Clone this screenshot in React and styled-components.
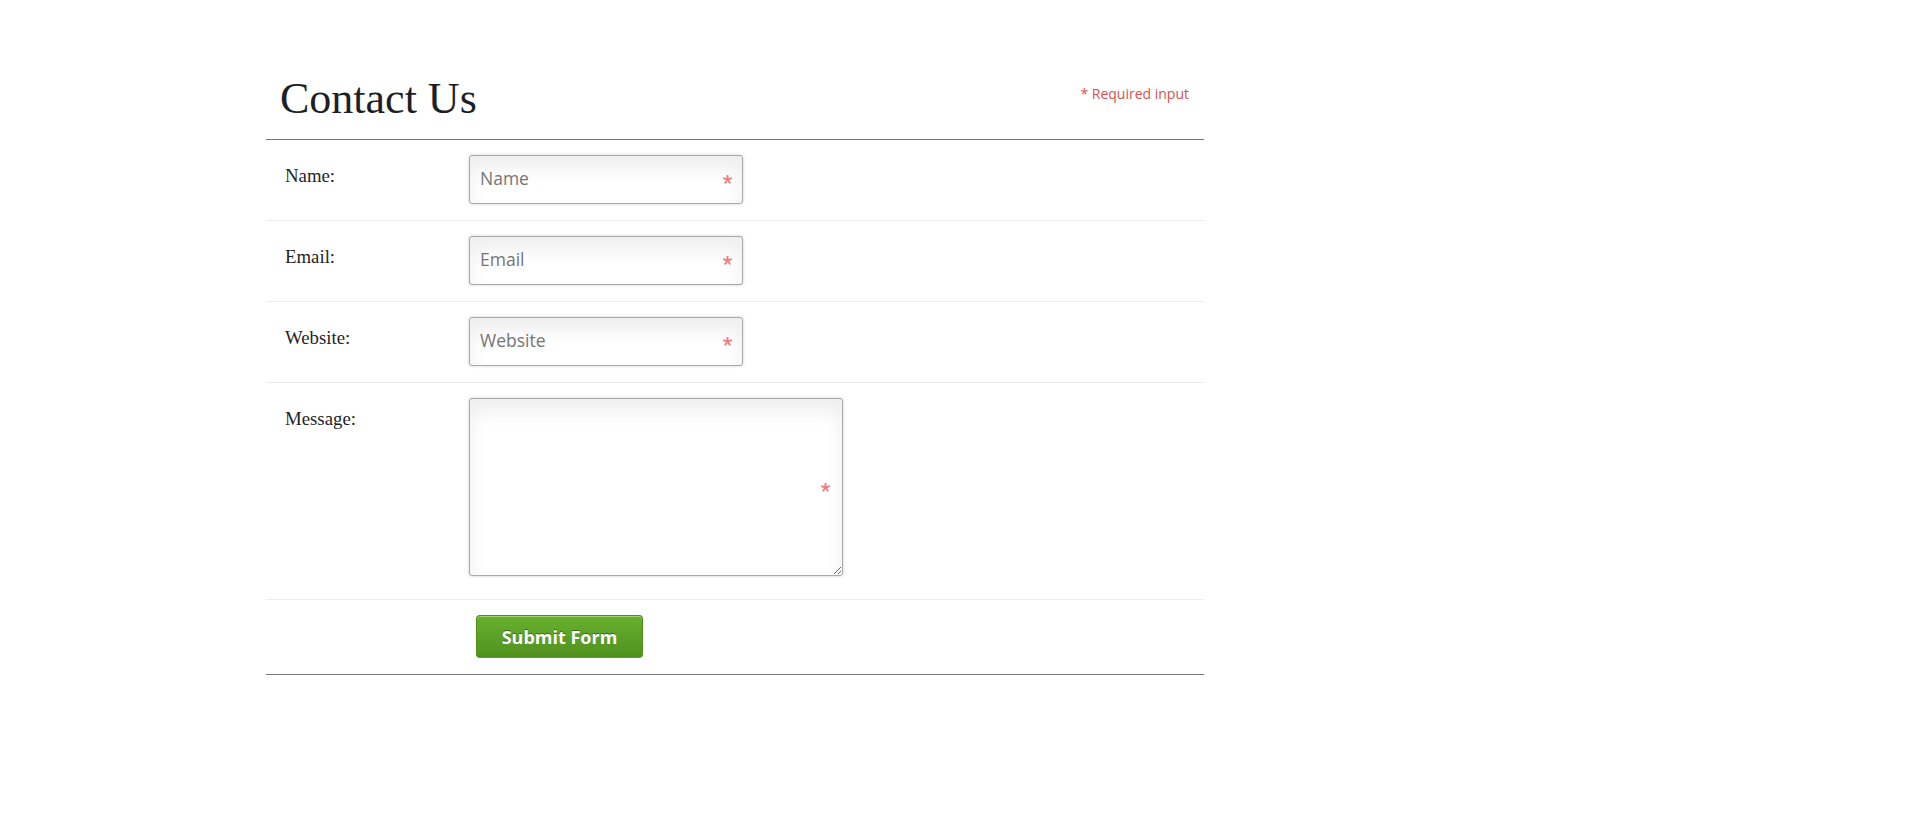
import React from 'react';
import styled, { createGlobalStyle } from 'styled-components';

const GlobalStyle = createGlobalStyle`
    * {
        box-sizing: border-box;
    }

    body {
        margin: 0;
        background: #fff;
        font-family: "Open Sans", "Liberation Sans", sans-serif;
        color: #222;
    }
`;

const Page = styled.div`
    padding: 62px 0 0 266px;
`;

const Form = styled.form`
    width: 938px;
`;

const Header = styled.div`
    display: flex;
    justify-content: space-between;
    align-items: flex-start;
    padding: 15px 15px 18px 14px;
    border-bottom: 1px solid #777;
`;

const Title = styled.h2`
    margin: 0;
    font-family: "Liberation Serif", "Times New Roman", serif;
    font-weight: normal;
    font-size: 44px;
    line-height: 44px;
    color: #1e1f26;
`;

const RequiredNote = styled.span`
    margin-top: 8px;
    font-size: 14px;
    line-height: 18px;
    color: #d45252;
`;

const Row = styled.div`
    display: grid;
    grid-template-columns: 184px auto;
    align-items: start;
    padding: 15px 19px 16px;
    border-bottom: 1px solid ${(p) => (p.$last ? '#777' : '#ededed')};
`;

const Label = styled.label`
    margin-top: 11px;
    font-family: "Liberation Serif", "Times New Roman", serif;
    font-size: 18.8px;
    line-height: 20px;
    color: #1e1f26;
`;

const FieldWrap = styled.div`
    position: relative;
    width: fit-content;
`;

const fieldLook = `
    display: block;
    border: 1px solid #aaa;
    border-radius: 3px;
    box-shadow: 0 0 3px #ccc, inset 0 12px 19px #eee;
    background: #fff;
    font-family: "Open Sans", "Liberation Sans", sans-serif;
    font-size: 17.5px;
    color: #555;
    outline: none;

    &::placeholder {
        color: #757575;
    }
`;

const Input = styled.input`
    ${fieldLook}
    width: 274px;
    height: 49px;
    padding: 0 38px 3px 10px;
`;

const TextArea = styled.textarea`
    ${fieldLook}
    width: 374px;
    height: 178px;
    margin: 0 0 7px;
    padding: 10px 40px 10px 10px;
`;

const Star = styled.svg`
    position: absolute;
    top: 50%;
    right: ${(p) => p.$offset}px;
    width: 9px;
    height: 9px;
    margin-top: ${(p) => (p.$lift ? -8 : -5)}px;
    pointer-events: none;
`;

const SubmitButton = styled.button`
    margin-left: 7px;
    width: 167px;
    height: 43px;
    border: 1px solid #509111;
    border-bottom-color: #5b992b;
    border-radius: 4px;
    background: linear-gradient(#68b12f, #50911e);
    box-shadow: inset 0 1px 0 0 #9fd574;
    color: #fff;
    font-family: "Open Sans", "Liberation Sans", sans-serif;
    font-size: 18px;
    font-weight: bold;
    text-shadow: 0 -1px 0 #396715;
    cursor: pointer;
`;

// little red star drawn in place of the old background png
const RequiredStar = ({ offset, lift }) => (
    <Star $offset={offset} $lift={lift} viewBox="0 0 10 10">
        <g stroke="#ee7f7f" strokeWidth="2.2" strokeLinecap="round">
            <line x1="5" y1="5" x2="5" y2="0.8" />
            <line x1="5" y1="5" x2="9" y2="3.7" />
            <line x1="5" y1="5" x2="7.5" y2="8.6" />
            <line x1="5" y1="5" x2="2.5" y2="8.6" />
            <line x1="5" y1="5" x2="1" y2="3.7" />
        </g>
    </Star>
);

const fields = [
    { id: 'name', label: 'Name:', placeholder: 'Name', type: 'text' },
    { id: 'email', label: 'Email:', placeholder: 'Email', type: 'email' },
    { id: 'website', label: 'Website:', placeholder: 'Website', type: 'url' },
];

const App = () => {
    return (
        <Page>
            <GlobalStyle />
            <Form onSubmit={(e) => e.preventDefault()}>
                <Header>
                    <Title>Contact Us</Title>
                    <RequiredNote>* Required input</RequiredNote>
                </Header>

                {fields.map((f) => (
                    <Row key={f.id}>
                        <Label htmlFor={f.id}>{f.label}</Label>
                        <FieldWrap>
                            <Input id={f.id} type={f.type} placeholder={f.placeholder} />
                            <RequiredStar offset={11} />
                        </FieldWrap>
                    </Row>
                ))}

                <Row>
                    <Label htmlFor='message'>Message:</Label>
                    <FieldWrap>
                        <TextArea id='message' />
                        <RequiredStar offset={13} lift />
                    </FieldWrap>
                </Row>

                <Row $last>
                    <span />
                    <div>
                        <SubmitButton type='submit'>Submit Form</SubmitButton>
                    </div>
                </Row>
            </Form>
        </Page>
    );
}

export default App;
